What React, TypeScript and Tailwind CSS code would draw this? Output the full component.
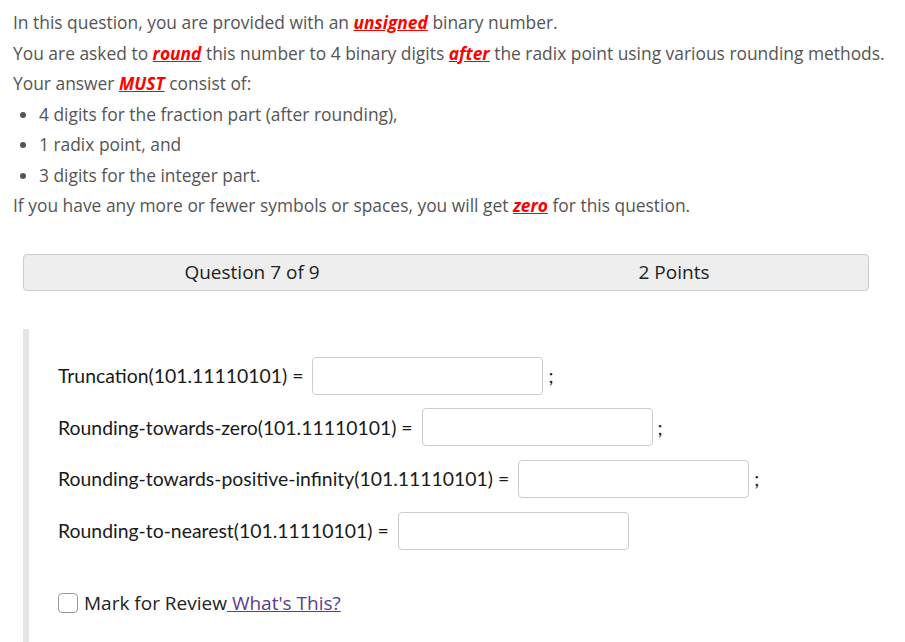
import { Fragment } from 'react'

const EXPR = '101.11110101'

const ROWS = [
  { label: 'Truncation', semi: true },
  { label: 'Rounding-towards-zero', semi: true },
  { label: 'Rounding-towards-positive-infinity', semi: true },
  { label: 'Rounding-to-nearest', semi: false },
]

function Em({ children }: { children: React.ReactNode }) {
  return <span className="font-bold italic underline text-[#ff0000]">{children}</span>
}

const condensed = { fontFamily: '"Open Sans", sans-serif', fontStretch: '92%' }

export default function App() {
  return (
    <div className="min-h-screen bg-white overflow-hidden">
      <div
        className="pl-[13px] pt-[7px] text-[17.4px] leading-[30.5px] text-[#555555]"
        style={{ fontFamily: '"Open Sans", sans-serif' }}
      >
        <p>
          In this question, you are provided with an <Em>unsigned</Em> binary number.
        </p>
        <p>
          You are asked to <Em>round</Em> this number to 4 binary digits <Em>after</Em> the radix
          point using various rounding methods.
        </p>
        <p>
          Your answer <Em>MUST</Em> consist of:
        </p>
        <ul className="list-disc pl-[26px]">
          <li>4 digits for the fraction part (after rounding),</li>
          <li>1 radix point, and</li>
          <li>3 digits for the integer part.</li>
        </ul>
        <p>
          If you have any more or fewer symbols or spaces, you will get <Em>zero</Em> for this
          question.
        </p>
      </div>

      <div
        className="mt-[33px] ml-[23px] w-[846px] h-[37px] grid grid-cols-[456px_1fr] items-center bg-[#eeeeee] border border-[#cccccc] rounded-[4px] text-[19px] text-[#222222]"
        style={condensed}
      >
        <div className="text-center">Question 7 of 9</div>
        <div className="text-center">2 Points</div>
      </div>

      <div className="mt-[38px] ml-[23px] border-l-[6px] border-[#e5e5e5] pl-[29px] pt-[28px] pb-[40px]">
        <div
          className="flex flex-col gap-[13.7px] text-[19.4px] text-[#1a1a1a]"
          style={{ fontFamily: 'Lato, "Open Sans", sans-serif' }}
        >
          {ROWS.map((r) => (
            <div key={r.label} className="flex items-center h-[38px]">
              <span>
                {r.label}({EXPR}) =
              </span>
              <input
                type="text"
                className="ml-[9px] w-[231px] h-[38px] border border-[#cccccc] rounded-[4px] bg-white outline-none"
              />
              {r.semi && (
                <Fragment>
                  <span className="ml-[5px]">;</span>
                </Fragment>
              )}
            </div>
          ))}
        </div>

        <div className="mt-[39px] flex items-center text-[19px] text-[#222222]" style={condensed}>
          <span className="w-[20px] h-[20px] border border-[#999999] rounded-[4px] bg-white inline-block" />
          <span className="ml-[6px]">Mark for Review</span>
          <a href="#" className="underline text-[#5b3c8e] whitespace-pre">
            {' '}What's This?
          </a>
        </div>
      </div>
    </div>
  )
}
